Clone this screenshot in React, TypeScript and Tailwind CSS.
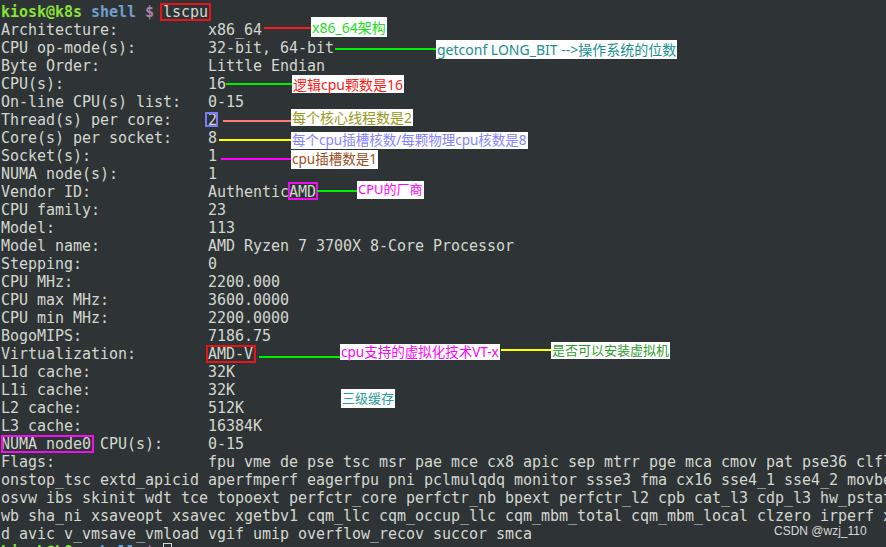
import React from 'react'

const rows: [string, string][] = [
  ['Architecture:', 'x86_64'],
  ['CPU op-mode(s):', '32-bit, 64-bit'],
  ['Byte Order:', 'Little Endian'],
  ['CPU(s):', '16'],
  ['On-line CPU(s) list:', '0-15'],
  ['Thread(s) per core:', '2'],
  ['Core(s) per socket:', '8'],
  ['Socket(s):', '1'],
  ['NUMA node(s):', '1'],
  ['Vendor ID:', 'AuthenticAMD'],
  ['CPU family:', '23'],
  ['Model:', '113'],
  ['Model name:', 'AMD Ryzen 7 3700X 8-Core Processor'],
  ['Stepping:', '0'],
  ['CPU MHz:', '2200.000'],
  ['CPU max MHz:', '3600.0000'],
  ['CPU min MHz:', '2200.0000'],
  ['BogoMIPS:', '7186.75'],
  ['Virtualization:', 'AMD-V'],
  ['L1d cache:', '32K'],
  ['L1i cache:', '32K'],
  ['L2 cache:', '512K'],
  ['L3 cache:', '16384K'],
  ['NUMA node0 CPU(s):', '0-15'],
  ['Flags:', 'fpu vme de pse tsc msr pae mce cx8 apic sep mtrr pge mca cmov pat pse36 clflush mmx'],
]

const flagLines = [
  'onstop_tsc extd_apicid aperfmperf eagerfpu pni pclmulqdq monitor ssse3 fma cx16 sse4_1 sse4_2 movbe popcnt',
  'osvw ibs skinit wdt tce topoext perfctr_core perfctr_nb bpext perfctr_l2 cpb cat_l3 cdp_l3 hw_pstate sme',
  'wb sha_ni xsaveopt xsavec xgetbv1 cqm_llc cqm_occup_llc cqm_mbm_total cqm_mbm_local clzero irperf xsaveerptr',
  'd avic v_vmsave_vmload vgif umip overflow_recov succor smca',
]

function Prompt({ cmd, cursor }: { cmd?: string; cursor?: boolean }) {
  return (
    <div>
      <span className="font-bold text-[#8ae234]">kiosk@k8s</span>{' '}
      <span className="font-bold text-[#729fcf]">shell</span>{' '}
      <span className="font-bold text-[#ad7fa8]">$</span>{' '}
      {cmd}
      {cursor && <span className="inline-block w-[9px] h-[17px] align-[-3px] border border-[#d3d7cf]" />}
    </div>
  )
}

// annotation pieces sit over the terminal
function Box({ cls }: { cls: string }) {
  return <div className={`absolute border-2 ${cls}`} />
}

function Line({ cls }: { cls: string }) {
  return <div className={`absolute h-[2px] ${cls}`} />
}

function Note({ cls, children }: { cls: string; children: React.ReactNode }) {
  return (
    <div
      className={`absolute flex items-center bg-white px-[1px] whitespace-nowrap font-['Noto_Sans','Noto_Sans_CJK_SC',sans-serif] ${cls}`}
    >
      {children}
    </div>
  )
}

export default function App() {
  return (
    <div className="relative w-[886px] h-[547px] overflow-hidden bg-[#2e3436]">
      <div className="pt-[3px] pl-[1px] whitespace-pre text-[15px] leading-[18px] tracking-[-0.03px] text-[#d3d7cf] font-['DejaVu_Sans_Mono',monospace]">
        <Prompt cmd="lscpu" />
        {rows.map(([k, v]) => (
          <div key={k}>{k.padEnd(23) + v}</div>
        ))}
        {flagLines.map((l) => (
          <div key={l}>{l}</div>
        ))}
        <Prompt cursor />
      </div>

      {/* highlight boxes */}
      <Box cls="left-[160px] top-[3px] w-[51px] h-[18px] border-[#e8141a]" />
      <Box cls="left-[205px] top-[112px] w-[13px] h-[15px] border-[#7b7bf5]" />
      <Box cls="left-[288px] top-[182px] w-[30px] h-[18px] border-[#ee10ee]" />
      <Box cls="left-[206px] top-[345px] w-[50px] h-[18px] border-[#e8141a]" />
      <Box cls="left-[1px] top-[435px] w-[93px] h-[18px] border-[#ee10ee]" />

      {/* connectors */}
      <Line cls="left-[264px] top-[27px] w-[47px] bg-[#ff1a1a]" />
      <Line cls="left-[335px] top-[48px] w-[101px] bg-[#00ee00]" />
      <Line cls="left-[226px] top-[83px] w-[66px] bg-[#00ee00]" />
      <Line cls="left-[223px] top-[120px] w-[68px] bg-[#ff7b7b]" />
      <Line cls="left-[219px] top-[139px] w-[72px] bg-[#ffff00]" />
      <Line cls="left-[221px] top-[158px] w-[70px] bg-[#ff00ff]" />
      <Line cls="left-[317px] top-[190px] w-[40px] bg-[#00ee00]" />
      <Line cls="left-[259px] top-[356px] w-[81px] bg-[#00ee00]" />
      <Line cls="left-[501px] top-[349px] w-[50px] bg-[#ffff00]" />

      {/* labels */}
      <Note cls="left-[311px] top-[17px] h-[20px] text-[14px] text-[#22dd22]">x86_64架构</Note>
      <Note cls="left-[436px] top-[40px] h-[19px] text-[14px] text-[#1a8f8f]">getconf LONG_BIT --&gt;操作系统的位数</Note>
      <Note cls="left-[292px] top-[75px] h-[18px] text-[14px] text-[#ff1a1a]">逻辑cpu颗数是16</Note>
      <Note cls="left-[291px] top-[109px] h-[17px] text-[14px] text-[#9a9a22]">每个核心线程数是2</Note>
      <Note cls="left-[291px] top-[132px] h-[17px] text-[13.5px] text-[#8585ff]">每个cpu插槽核数/每颗物理cpu核数是8</Note>
      <Note cls="left-[291px] top-[150px] h-[19px] text-[13.5px] text-[#9a4d1a]">cpu插槽数是1</Note>
      <Note cls="left-[357px] top-[181px] h-[18px] text-[13px] text-[#ff00ff]">CPU的厂商</Note>
      <Note cls="left-[340px] top-[344px] h-[16px] text-[13.5px] text-[#ff00ff]">cpu支持的虚拟化技术VT-x</Note>
      <Note cls="left-[551px] top-[342px] h-[17px] text-[13px] text-[#2e9b2e]">是否可以安装虚拟机</Note>
      <Note cls="left-[341px] top-[389px] h-[19px] text-[13px] text-[#2a9a9a]">三级缓存</Note>

      <div className="absolute left-[774px] top-[522px] text-[12px] text-[#d8d8d8] font-['Liberation_Sans',sans-serif]">
        CSDN @wzj_110
      </div>
    </div>
  )
}
